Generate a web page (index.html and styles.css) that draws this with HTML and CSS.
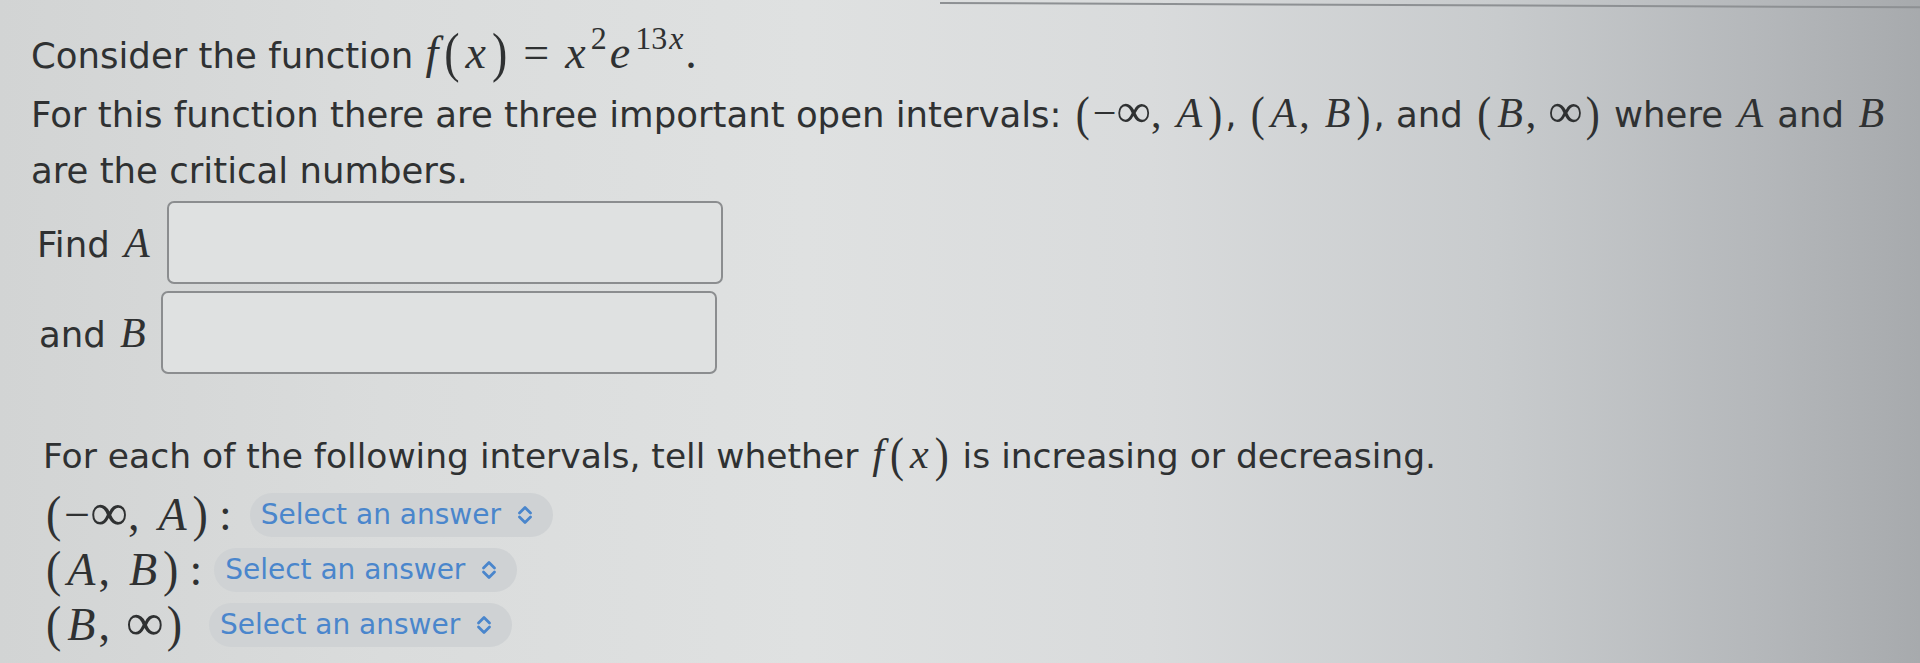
FILE: index.html
```html
<!DOCTYPE html>
<html lang="en">
<head>
<meta charset="utf-8">
<title>Question</title>
<link rel="stylesheet" href="styles.css">
</head>
<body>
<div class="edge"></div>
<main class="question">
  <p class="line first">Consider the function <span class="math m1"><i>f</i><span class="paren">(</span><i>x</i><span class="paren">)</span><span class="op">=</span><i>x</i><sup>2</sup><i>e</i><sup>13<i class="sx">x</i></sup>.</span></p>
  <p class="line second">For this function there are three important open intervals: <span class="math"><span class="paren">(</span>−<span class="inf">∞</span>,<span class="th"></span><i>A</i><span class="paren">)</span></span>, <span class="math"><span class="paren">(</span><i>A</i>,<span class="th"></span><i>B</i><span class="paren">)</span></span>, and <span class="math"><span class="paren">(</span><i>B</i>,<span class="th"></span><span class="inf">∞</span><span class="paren">)</span></span> where <span class="math"><i>A</i></span> and <span class="math"><i>B</i></span><br>are the critical numbers.</p>

  <div class="answer-row row-a">
    <span class="label">Find <span class="math"><i>A</i></span></span>
    <span class="box box-a"></span>
  </div>
  <div class="answer-row row-b">
    <span class="label">and <span class="math"><i>B</i></span></span>
    <span class="box box-b"></span>
  </div>

  <p class="line third">For each of the following intervals, tell whether <span class="math"><i>f</i><span class="paren">(</span><i>x</i><span class="paren">)</span></span> is increasing or decreasing.</p>

  <div class="select-row r1">
    <span class="math big"><span class="paren">(</span>−<span class="inf">∞</span>,<span class="th"></span><i>A</i><span class="paren">)</span><span class="colon">:</span></span>
    <span class="pill">Select an answer <svg class="chev" viewBox="0 0 16 22" width="16" height="22"><path d="M2.5 9 L8 3.5 L13.5 9 M2.5 13 L8 18.5 L13.5 13" fill="none" stroke="#4a86cc" stroke-width="2.8" stroke-linecap="round" stroke-linejoin="round"/></svg></span>
  </div>
  <div class="select-row r2">
    <span class="math big"><span class="paren">(</span><i>A</i>,<span class="th"></span><i>B</i><span class="paren">)</span><span class="colon">:</span></span>
    <span class="pill">Select an answer <svg class="chev" viewBox="0 0 16 22" width="16" height="22"><path d="M2.5 9 L8 3.5 L13.5 9 M2.5 13 L8 18.5 L13.5 13" fill="none" stroke="#4a86cc" stroke-width="2.8" stroke-linecap="round" stroke-linejoin="round"/></svg></span>
  </div>
  <div class="select-row r3">
    <span class="math big"><span class="paren">(</span><i>B</i>,<span class="th"></span><span class="inf">∞</span><span class="paren">)</span></span>
    <span class="pill">Select an answer <svg class="chev" viewBox="0 0 16 22" width="16" height="22"><path d="M2.5 9 L8 3.5 L13.5 9 M2.5 13 L8 18.5 L13.5 13" fill="none" stroke="#4a86cc" stroke-width="2.8" stroke-linecap="round" stroke-linejoin="round"/></svg></span>
  </div>
</main>
</body>
</html>
```
FILE: styles.css
```css
html, body {
  margin: 0;
  padding: 0;
  height: 100%;
  overflow: hidden;
}
body {
  background: linear-gradient(90deg, #d2d4d4 0%, #dadcdc 20%, #dfe1e1 42%, #d9dbdc 60%, #c8cbcd 78%, #b4b7ba 92%, #a7aaad 100%);
  color: #2f3132;
  font-family: "DejaVu Sans", Verdana, sans-serif;
  font-size: 35.5px;
  position: relative;
}
.edge {
  position: absolute;
  left: 940px;
  right: 0;
  top: 2px;
  height: 2px;
  background: #8d9093;
  transform: rotate(0.25deg);
  transform-origin: left center;
}
.question {
  padding: 30px 0 0 31px;
  display: flex;
  flex-direction: column;
}
.line {
  margin: 0;
  line-height: 56px;
}
.first { line-height: 50px; }
.second { margin-top: 6px; }
.math {
  font-family: "Liberation Serif", "DejaVu Serif", serif;
  font-size: 42px;
  line-height: 1;
}
.m1 { font-size: 46px; }
.math i { font-style: italic; padding: 0 3px; }
.m1 > i:first-child { padding-left: 1px; }
.op { margin: 0 13px; }
.th { display: inline-block; width: 12px; }
.inf { font-size: 1.15em; line-height: 0; }
.math sup {
  font-size: 32px;
  line-height: 0;
  vertical-align: 19px;
  padding-left: 2px;
}
.math sup i { padding: 0 2px; }
.paren {
  display: inline-block;
  transform: scaleY(1.18);
  padding: 0 3px;
  line-height: 1;
}
.colon { padding-left: 8px; }
.answer-row {
  display: flex;
  align-items: center;
  gap: 14px;
}
.row-a { margin-top: 2px; padding-left: 6px; }
.row-b { margin-top: 7px; padding-left: 8px; }
.row-b .answer-row, .row-b { gap: 12px; }
.label { line-height: 1; }
.box {
  display: block;
  height: 83px;
  border: 2px solid #8b8d8f;
  border-radius: 7px;
  background: #dfe1e1;
  box-sizing: border-box;
}
.box-a { width: 556px; }
.box-b { width: 556px; }
.third {
  margin-top: 54px;
  padding-left: 12px;
  font-size: 34.5px;
}
.select-row {
  display: flex;
  align-items: center;
  gap: 12px;
  padding-left: 12px;
  height: 55px;
}
.big { font-size: 46px; }
.big .paren { transform: scaleY(1.08); }
.big .th { width: 16px; }
.r1 { margin-top: 3px; }
.r1 .pill { margin-left: 6px; }
.r3 .pill { margin-left: 12px; }
.pill {
  display: inline-flex;
  align-items: center;
  gap: 16px;
  height: 44px;
  padding: 0 20px 0 11px;
  border-radius: 22px;
  background: #cfd2d4;
  color: #4a86cc;
  font-family: "DejaVu Sans", Verdana, sans-serif;
  font-size: 28px;
  line-height: 1;
}
.chev { display: block; }
```
